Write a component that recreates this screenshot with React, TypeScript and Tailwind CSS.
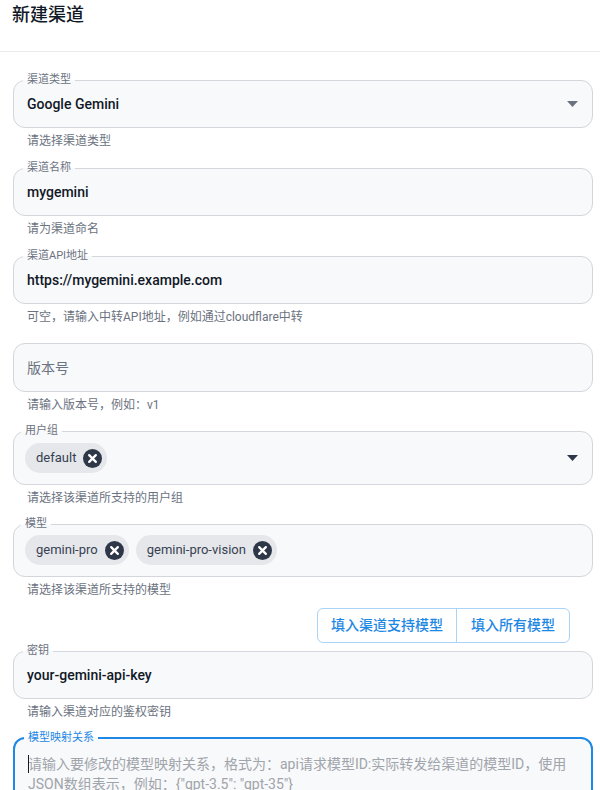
import type { ReactNode } from "react";

const FONT = "font-['Roboto','Noto_Sans_CJK_SC',sans-serif]";

function Arrow({ dark }: { dark?: boolean }) {
  return (
    <svg width="11" height="6" viewBox="0 0 11 6" className="shrink-0">
      <path d="M0 0 L11 0 L5.5 6 Z" fill={dark ? "#2d3748" : "#6b7280"} />
    </svg>
  );
}

function Chip({ text }: { text: string }) {
  return (
    <span className="flex h-[30px] items-center gap-[7px] rounded-full bg-[#e5e7eb] pl-[11px] pr-[5px] text-[13px] text-[#374151]">
      {text}
      <svg width="19" height="19" viewBox="0 0 20 20">
        <circle cx="10" cy="10" r="10" fill="#2d3748" />
        <path d="M6.5 6.5 L13.5 13.5 M13.5 6.5 L6.5 13.5" stroke="#fff" strokeWidth="2.4" strokeLinecap="round" />
      </svg>
    </span>
  );
}

function Field({
  label,
  children,
  className = "",
  focused,
}: {
  label: string;
  children: ReactNode;
  className?: string;
  focused?: boolean;
}) {
  return (
    <fieldset
      className={`min-w-0 rounded-xl bg-[#f8f9fa] px-[13px] ${
        focused ? "border-2 border-[#1e88e5] px-[12px]" : "border border-[#d3d6db]"
      } ${className}`}
    >
      <legend
        className={`-ml-[4px] px-[4px] text-[11px] leading-[14px] ${
          focused ? "text-[#1e88e5]" : "text-[#6b7280]"
        }`}
      >
        {label}
      </legend>
      {children}
    </fieldset>
  );
}

function Helper({ children, className = "mt-[4px]" }: { children: ReactNode; className?: string }) {
  return <p className={`pl-[14px] text-[12px] leading-[18px] text-[#6b7280] ${className}`}>{children}</p>;
}

export default function App() {
  return (
    <div className={`min-h-screen bg-white ${FONT}`}>
      <div className="h-[52px] border-b border-[#e8eaed] pl-[12px] pt-px">
        <h1 className="text-[18px] font-medium leading-[28px] text-[#111827]">新建渠道</h1>
      </div>

      <div className="flex flex-col pl-[13px] pr-[7px]">
        {/* 渠道类型 */}
        <Field label="渠道类型" className="mt-[21px] pb-[11px] pt-[5px]">
          <div className="flex items-center justify-between pr-[1px]">
            <span className="text-[14px] font-medium leading-[24px] text-[#111827]">Google Gemini</span>
            <Arrow />
          </div>
        </Field>
        <Helper>请选择渠道类型</Helper>

        {/* 渠道名称 */}
        <Field label="渠道名称" className="mt-[11px] pb-[11px] pt-[5px]">
          <div className="text-[14px] font-medium leading-[24px] text-[#111827]">mygemini</div>
        </Field>
        <Helper>请为渠道命名</Helper>

        {/* 渠道API地址 */}
        <Field label="渠道API地址" className="mt-[11px] pb-[11px] pt-[5px]">
          <div className="text-[14px] font-medium leading-[24px] text-[#111827]">https://mygemini.example.com</div>
        </Field>
        <Helper>可空，请输入中转API地址，例如通过cloudflare中转</Helper>

        {/* 版本号 */}
        <div className="mt-[17px] flex h-[49px] items-center rounded-xl border border-[#d3d6db] bg-[#f8f9fa] px-[13px]">
          <span className="text-[14px] leading-[24px] text-[#6b7280]">版本号</span>
        </div>
        <Helper>请输入版本号，例如：v1</Helper>

        {/* 用户组 */}
        <Field label="用户组" className="mt-[10px] pb-[11px] pt-[5px] pl-[11px]">
          <div className="flex items-center justify-between pr-[1px]">
            <Chip text="default" />
            <Arrow dark />
          </div>
        </Field>
        <Helper>请选择该渠道所支持的用户组</Helper>

        {/* 模型 */}
        <Field label="模型" className="mt-[10px] pb-[11px] pt-[4px] pl-[11px]">
          <div className="flex items-center gap-[7px]">
            <Chip text="gemini-pro" />
            <Chip text="gemini-pro-vision" />
          </div>
        </Field>
        <Helper>请选择该渠道所支持的模型</Helper>

        <div className="mt-[9px] flex justify-end pr-[23px]">
          <div className="flex h-[35px] overflow-hidden rounded-md border border-[#a9d3f7] text-[14px] font-medium text-[#1e88e5]">
            <button className="px-[13px]">填入渠道支持模型</button>
            <button className="border-l border-[#a9d3f7] px-[14px]">填入所有模型</button>
          </div>
        </div>

        {/* 密钥 */}
        <Field label="密钥" className="mt-[1px] pb-[11px] pt-[5px]">
          <div className="text-[14px] font-medium leading-[24px] text-[#111827]">your-gemini-api-key</div>
        </Field>
        <Helper>请输入渠道对应的鉴权密钥</Helper>

        {/* 模型映射关系 */}
        <Field label="模型映射关系" focused className="mt-[10px] pb-[16px] pt-[9px]">
          <p className="relative text-[14px] leading-[20px] text-[#a0a4ab]">
            <span className="absolute left-0 top-[1px] h-[18px] w-px bg-[#111827]" />
            请输入要修改的模型映射关系，格式为：api请求模型ID:实际转发给渠道的模型ID，使用
            <br />
            JSON数组表示，例如：{'{"gpt-3.5": "gpt-35"}'}
          </p>
        </Field>
        <div className="h-[40px]" />
      </div>
    </div>
  );
}
